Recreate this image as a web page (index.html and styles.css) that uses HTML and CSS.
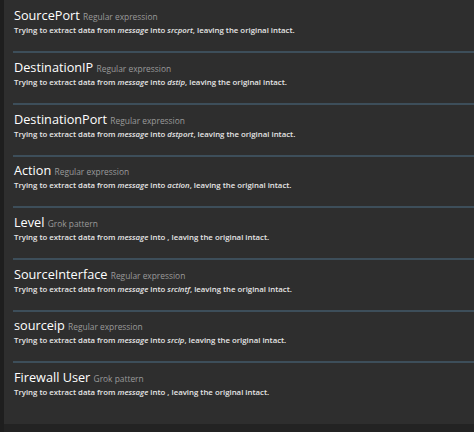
FILE: index.html
```html
<!DOCTYPE html>
<html>
<head>
<meta charset="utf-8">
<link rel="stylesheet" href="styles.css">
</head>
<body>
<div class="page">
  <div class="panel">
    <ul class="extractors">
      <li class="extractor">
        <div class="title">SourcePort <span class="type">Regular expression</span></div>
        <div class="desc">Trying to extract data from <em>message</em> into <em>srcport</em>, leaving the original intact.</div>
      </li>
      <li class="extractor">
        <div class="title">DestinationIP <span class="type">Regular expression</span></div>
        <div class="desc">Trying to extract data from <em>message</em> into <em>dstip</em>, leaving the original intact.</div>
      </li>
      <li class="extractor">
        <div class="title">DestinationPort <span class="type">Regular expression</span></div>
        <div class="desc">Trying to extract data from <em>message</em> into <em>dstport</em>, leaving the original intact.</div>
      </li>
      <li class="extractor">
        <div class="title">Action <span class="type">Regular expression</span></div>
        <div class="desc">Trying to extract data from <em>message</em> into <em>action</em>, leaving the original intact.</div>
      </li>
      <li class="extractor">
        <div class="title">Level <span class="type">Grok pattern</span></div>
        <div class="desc">Trying to extract data from <em>message</em> into , leaving the original intact.</div>
      </li>
      <li class="extractor">
        <div class="title">SourceInterface <span class="type">Regular expression</span></div>
        <div class="desc">Trying to extract data from <em>message</em> into <em>srcintf</em>, leaving the original intact.</div>
      </li>
      <li class="extractor">
        <div class="title">sourceip <span class="type">Regular expression</span></div>
        <div class="desc">Trying to extract data from <em>message</em> into <em>srcip</em>, leaving the original intact.</div>
      </li>
      <li class="extractor">
        <div class="title">Firewall User <span class="type">Grok pattern</span></div>
        <div class="desc">Trying to extract data from <em>message</em> into , leaving the original intact.</div>
      </li>
    </ul>
  </div>
</div>
</body>
</html>
```
FILE: styles.css
```css
html, body {
  margin: 0;
  padding: 0;
  background: #232323;
}
body {
  font-family: "Open Sans", "Noto Sans", sans-serif;
  width: 474px;
  height: 432px;
  overflow: hidden;
}
.page {
  border-left: 4px solid #1e1e1e;
  height: 100%;
  box-sizing: border-box;
}
.panel {
  background: #2e2e2e;
  padding: 0 0 10.6px 9px;
}
.extractors {
  list-style: none;
  margin: 0;
  padding: 0;
}
.extractor {
  border-top: 2px solid #3d4e5a;
  padding: 5.57px 0 14.1px 1px;
}
.extractor:first-child {
  border-top: none;
  padding-top: 7.3px;
}
.title {
  font-size: 12.7px;
  line-height: 17px;
  color: #ffffff;
  white-space: nowrap;
}
.type {
  font-size: 8.4px;
  line-height: 1;
  color: #9a9a9a;
}
.desc {
  font-size: 7.8px;
  line-height: 13px;
  font-weight: 600;
  color: #e6e6e6;
  white-space: nowrap;
}
.desc em {
  font-style: italic;
}
```
